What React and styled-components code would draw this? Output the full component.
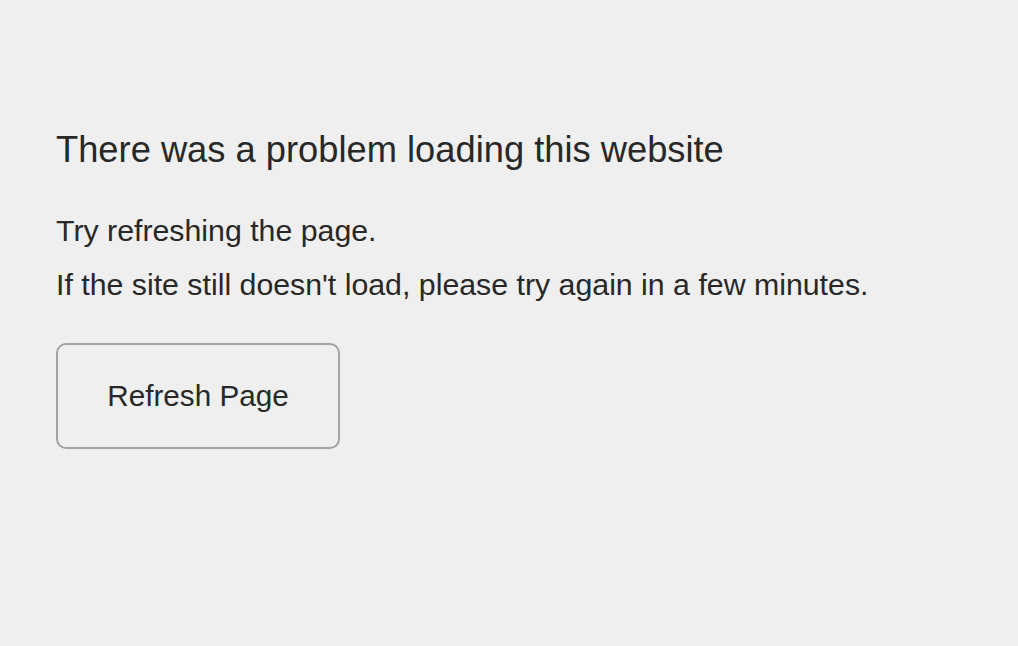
import React from "react";
import styled, { createGlobalStyle } from "styled-components";

const GlobalStyle = createGlobalStyle`
  html, body {
    margin: 0;
    padding: 0;
    background-color: #efefef;
  }
  body {
    font-family: "Liberation Sans", Arial, sans-serif;
    color: #282828;
  }
`;

const Page = styled.main`
  min-height: 100vh;
  box-sizing: border-box;
  padding: 128px 56px 0;
`;

const Title = styled.h1`
  margin: 0 0 32px;
  font-size: 36.3px;
  font-weight: 400;
  line-height: 44px;
`;

const Message = styled.p`
  margin: 0;
  font-size: 30.3px;
  line-height: 54px;
`;

const RefreshButton = styled.button`
  margin-top: 31px;
  width: 284px;
  height: 106px;
  box-sizing: border-box;
  background-color: transparent;
  border: 2px solid #a3a3a3;
  border-radius: 10px;
  font-family: inherit;
  font-size: 29.7px;
  color: #282828;
  cursor: pointer;
  &:hover {
    background-color: #e6e6e6;
  }
`;

const App = () => {
  return (
    <>
      <GlobalStyle />
      <Page>
        <Title>There was a problem loading this website</Title>
        <Message>Try refreshing the page.</Message>
        <Message>If the site still doesn't load, please try again in a few minutes.</Message>
        <RefreshButton onClick={() => window.location.reload()}>Refresh Page</RefreshButton>
      </Page>
    </>
  );
};

export default App;
